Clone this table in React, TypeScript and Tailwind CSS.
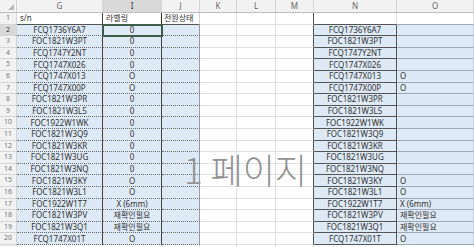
import React from 'react';

const rows: [string, string, string][] = [
  ['FCQ1736Y6A7', '0', ''],
  ['FOC1821W3PT', '0', ''],
  ['FCQ1747Y2NT', '0', ''],
  ['FCQ1747X026', '0', ''],
  ['FCQ1747X013', 'O', 'O'],
  ['FCQ1747X00P', 'O', 'O'],
  ['FOC1821W3PR', '0', ''],
  ['FOC1821W3L5', '0', ''],
  ['FOC1922W1WK', '0', ''],
  ['FOC1821W3Q9', '0', ''],
  ['FOC1821W3KR', '0', ''],
  ['FOC1821W3UG', '0', ''],
  ['FOC1821W3NQ', '0', ''],
  ['FOC1821W3KY', 'O', 'O'],
  ['FOC1821W3L1', 'O', 'O'],
  ['FOC1922W1T7', 'X (6mm)', 'X (6mm)'],
  ['FOC1821W3PV', '재확인필요', '재확인필요'],
  ['FOC1821W3Q1', '재확인필요', '재확인필요'],
  ['FCQ1747X01T', 'O', 'O'],
];

const cell = 'shrink-0 h-full flex items-center overflow-hidden whitespace-nowrap border-r border-b';

const HeaderCell: React.FC<{ label: string; w: string; active?: boolean }> = ({ label, w, active }) => (
  <div
    className={`${w} shrink-0 h-full flex items-center justify-center border-r border-[#d5d5d5] ${
      active ? 'bg-[#d9d9d9] text-[#333]' : 'text-[#666]'
    }`}
  >
    {label}
  </div>
);

const App: React.FC = () => {
  return (
    <div className="relative w-[474px] h-[247px] overflow-hidden bg-white text-[8px] text-[#333] font-['Noto_Sans','Noto_Sans_CJK_KR',sans-serif]">
      {/* column headers */}
      <div className="flex h-[13px] bg-[#f2f2f2] border-b border-[#bdbdbd]">
        <div className="relative w-[17px] shrink-0 h-full border-r border-[#d5d5d5]">
          <div className="absolute right-[2px] bottom-[2px] w-0 h-0 border-l-[6px] border-l-transparent border-b-[6px] border-b-[#b8b8b8]" />
        </div>
        <HeaderCell label="G" w="w-[86px]" />
        <HeaderCell label="I" w="w-[59px]" active />
        <HeaderCell label="J" w="w-[38px]" />
        <HeaderCell label="K" w="w-[37px]" />
        <HeaderCell label="L" w="w-[39px]" />
        <HeaderCell label="M" w="w-[38px]" />
        <HeaderCell label="N" w="w-[83px]" />
        <HeaderCell label="O" w="flex-1" />
      </div>

      {/* row 1 */}
      <div className="flex h-[11.6px]">
        <div className={`${cell} w-[17px] justify-center bg-[#f2f2f2] text-[7px] text-[#777] border-[#d5d5d5]`}>1</div>
        <div className={`${cell} w-[86px] pl-[3px] border-r-[#444] border-b-[#555]`}>s/n</div>
        <div className={`${cell} w-[59px] pl-[3px] border-r-[#333] border-b-[#333]`}>라벨링</div>
        <div className={`${cell} w-[38px] pl-[2px] border-r-[#d5d5d5] border-b-[#555]`}>전원상태</div>
        <div className={`${cell} w-[37px] border-[#e0e0e0]`} />
        <div className={`${cell} w-[39px] border-[#e0e0e0]`} />
        <div className={`${cell} w-[38px] border-r-[#555] border-b-[#e0e0e0]`} />
        <div className={`${cell} w-[83px] border-r-[#e0e0e0] border-b-[#555]`} />
        <div className={`${cell} flex-1 border-r-[#e0e0e0] border-b-[#9aa8b8]`} />
      </div>

      {/* data rows 2-20 */}
      {rows.map(([sn, label, power], idx) => {
        const n = idx + 2;
        return (
          <div key={n} className="flex h-[11.6px]">
            <div
              className={`${cell} w-[17px] justify-center text-[7px] border-[#d5d5d5] ${
                n === 2 ? 'bg-[#d9d9d9] text-[#333]' : 'bg-[#f2f2f2] text-[#777]'
              }`}
            >
              {n}
            </div>
            <div className={`${cell} w-[86px] justify-center bg-[#dde9f5] border-r-[#444] border-b-[#666] [border-bottom-style:dotted]`}>
              {sn}
            </div>
            <div
              className={`${cell} w-[59px] justify-center bg-[#dde9f5] border-r-[#444] border-b-[#666] [border-bottom-style:dotted] ${
                n === 2 ? 'relative z-10 outline-2 outline-[#3f5e4a] -outline-offset-1' : ''
              }`}
            >
              {label}
            </div>
            <div className={`${cell} w-[38px] bg-[#dde9f5] border-r-[#8e9cab] border-b-[#666] [border-bottom-style:dotted]`} />
            <div className={`${cell} w-[37px] border-[#e0e0e0]`} />
            <div className={`${cell} w-[39px] border-[#e0e0e0]`} />
            <div className={`${cell} w-[38px] border-r-[#555] border-b-[#e0e0e0]`} />
            <div className={`${cell} w-[83px] justify-center bg-[#dde9f5] border-[#555]`}>{sn}</div>
            <div className={`${cell} flex-1 pl-[3px] bg-[#dde9f5] border-r-[#c8d4e0] border-b-[#9aa8b8]`}>{power}</div>
          </div>
        );
      })}

      {/* row 21, cut off at the bottom edge */}
      <div className="flex h-[11.6px]">
        <div className={`${cell} w-[17px] bg-[#f2f2f2] border-[#d5d5d5]`} />
        <div className={`${cell} w-[86px] border-[#e0e0e0]`} />
        <div className={`${cell} w-[59px] border-[#e0e0e0]`} />
        <div className={`${cell} w-[38px] border-[#e0e0e0]`} />
        <div className={`${cell} w-[37px] border-[#e0e0e0]`} />
        <div className={`${cell} w-[39px] border-[#e0e0e0]`} />
        <div className={`${cell} w-[38px] border-[#e0e0e0]`} />
        <div className={`${cell} w-[83px] border-[#e0e0e0]`} />
        <div className={`${cell} flex-1 border-[#e0e0e0]`} />
      </div>

      {/* page break watermark */}
      <div className="pointer-events-none absolute left-[184px] top-[151px] text-[35px] font-light leading-none whitespace-pre text-[#939393] font-['Noto_Sans_CJK_KR',sans-serif]">
        1 페이지
      </div>
    </div>
  );
};

export default App;
